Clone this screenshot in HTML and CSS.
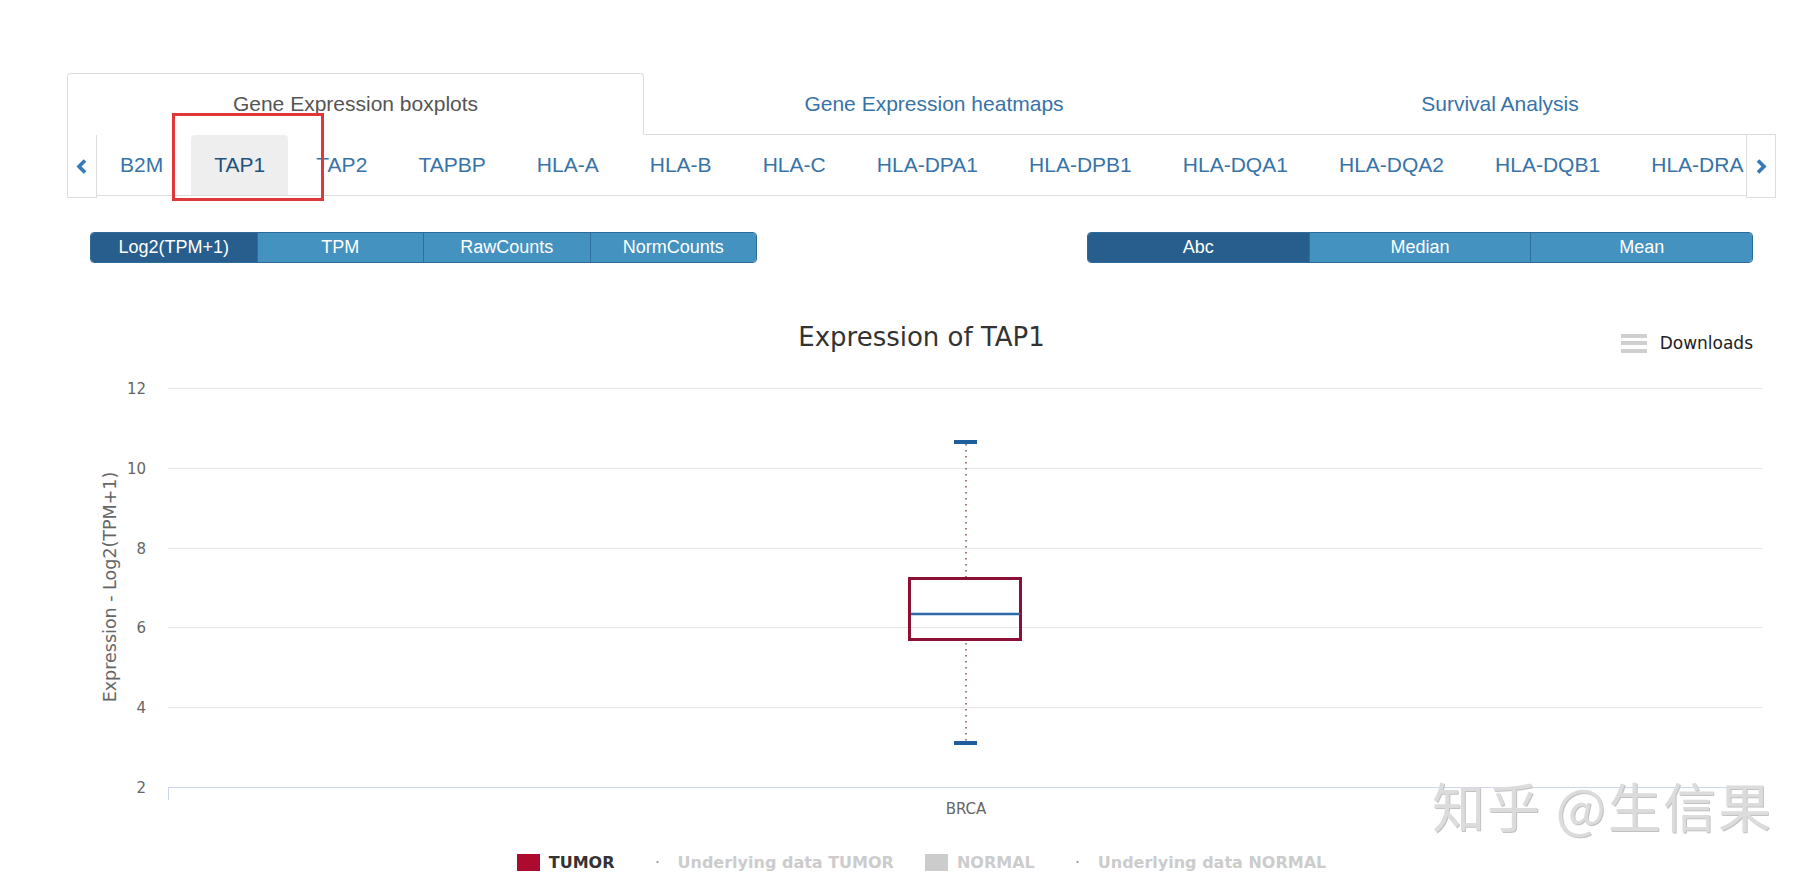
FILE: index.html
```html
<!DOCTYPE html>
<html>
<head>
<title>Gene Expression boxplots</title>
<link rel="stylesheet" href="styles.css">
</head>
<body>

<div class="page">
<!-- main tabs -->
<div class="main-tabs">
<div class="main-tab active">Gene Expression boxplots</div>
<div class="main-tab">Gene Expression heatmaps</div>
<div class="main-tab">Survival Analysis</div>
</div>

<!-- gene selector -->
<div class="gene-bar">
<div class="scroll-btn left">
<svg width="12" height="15" viewBox="0 0 12 15"><polyline points="9,1.5 3,7.5 9,13.5" fill="none" stroke="#337ab7" stroke-width="3.6"/></svg>
</div>
<div class="gene-list">
<span class="gene">B2M</span>
<span class="gene active">TAP1</span>
<span class="gene">TAP2</span>
<span class="gene">TAPBP</span>
<span class="gene">HLA-A</span>
<span class="gene">HLA-B</span>
<span class="gene">HLA-C</span>
<span class="gene">HLA-DPA1</span>
<span class="gene">HLA-DPB1</span>
<span class="gene">HLA-DQA1</span>
<span class="gene">HLA-DQA2</span>
<span class="gene">HLA-DQB1</span>
<span class="gene">HLA-DRA</span>
</div>
<div class="scroll-btn right">
<svg width="12" height="15" viewBox="0 0 12 15"><polyline points="3,1.5 9,7.5 3,13.5" fill="none" stroke="#337ab7" stroke-width="3.6"/></svg>
</div>
</div>

<div class="red-mark"></div>

<!-- unit / sort buttons -->
<div class="toolbar">
<div class="btn-group units">
<button class="btn active">Log2(TPM+1)</button>
<button class="btn">TPM</button>
<button class="btn">RawCounts</button>
<button class="btn">NormCounts</button>
</div>
<div class="btn-group sort">
<button class="btn active">Abc</button>
<button class="btn">Median</button>
<button class="btn">Mean</button>
</div>
</div>

<!-- chart -->
<div class="chart">
<div class="chart-title">Expression of TAP1</div>
<div class="export">
<span class="burger"><i></i><i></i><i></i></span>
<span>Downloads</span>
</div>

<svg class="plot" width="1709" height="470" viewBox="0 0 1709 470">
<g stroke="#e6e6e6" stroke-width="1">
<line x1="101" y1="36.5" x2="1695" y2="36.5"/>
<line x1="101" y1="116.5" x2="1695" y2="116.5"/>
<line x1="101" y1="196.5" x2="1695" y2="196.5"/>
<line x1="101" y1="275.5" x2="1695" y2="275.5"/>
<line x1="101" y1="355.5" x2="1695" y2="355.5"/>
</g>
<g stroke="#ccd6eb" stroke-width="1">
<line x1="101" y1="435.5" x2="1695" y2="435.5"/>
<line x1="101.5" y1="435" x2="101.5" y2="448"/>
</g>
<g class="y-labels" text-anchor="end">
<text x="79" y="41.5">12</text>
<text x="79" y="121.5">10</text>
<text x="79" y="201.5">8</text>
<text x="79" y="280.5">6</text>
<text x="79" y="360.5">4</text>
<text x="79" y="440.5">2</text>
</g>
<text class="y-title" transform="translate(43 235) rotate(-90)" text-anchor="middle">Expression - Log2(TPM+1)</text>
<text class="x-label" x="899" y="462" text-anchor="middle">BRCA</text>

<!-- box -->
<g stroke="#8a5e52" stroke-width="1.6" stroke-dasharray="1.6 4.4">
<line x1="899" y1="92" x2="899" y2="225"/>
<line x1="899" y1="291" x2="899" y2="389"/>
</g>
<g stroke="#1f5d9c" stroke-width="4">
<line x1="887" y1="90" x2="910" y2="90"/>
<line x1="887" y1="391" x2="910" y2="391"/>
</g>
<rect x="842.5" y="226.5" width="111" height="61" fill="none" stroke="#8c0f36" stroke-width="3"/>
<line x1="844" y1="262" x2="953" y2="262" stroke="#2e6aa6" stroke-width="2.4"/>
</svg>

<div class="legend">
<div class="legend-item"><span class="swatch tumor"></span><span class="label on">TUMOR</span></div>
<div class="legend-item"><span class="dot"></span><span class="label">Underlying data TUMOR</span></div>
<div class="legend-item"><span class="swatch normal"></span><span class="label">NORMAL</span></div>
<div class="legend-item"><span class="dot"></span><span class="label">Underlying data NORMAL</span></div>
</div>
</div>

<div class="watermark">知乎 @生信果</div>
</div>

</body>
</html>
```

FILE: styles.css
```css
* {
margin: 0;
padding: 0;
box-sizing: border-box;
}

body {
background: #fff;
font-family: 'Liberation Sans', Arial, sans-serif;
color: #333;
}

.page {
position: relative;
width: 1709px;
margin-left: 67px;
padding-top: 73px;
height: 882px;
}

/* main tabs */
.main-tabs {
display: grid;
grid-template-columns: 577px 580px 1fr;
height: 62px;
}

.main-tab {
display: flex;
align-items: center;
justify-content: center;
font-size: 21px;
color: #3873a8;
border-bottom: 1px solid #ddd;
}

.main-tab.active {
color: #555;
border: 1px solid #ddd;
border-bottom-color: transparent;
border-radius: 4px 4px 0 0;
}

/* gene selector */
.gene-bar {
display: flex;
align-items: flex-start;
}

.scroll-btn {
flex: none;
width: 30px;
height: 63px;
display: flex;
align-items: center;
justify-content: center;
border: 1px solid #ddd;
background: #fff;
}

.scroll-btn.left {
border-top: none;
}

.scroll-btn.right {
height: 64px;
margin-top: -1px;
}

.gene-list {
flex: 1;
display: flex;
gap: 5.1px;
height: 61px;
overflow: hidden;
border-bottom: 1px solid #ddd;
}

.gene {
flex: none;
padding: 0 23px;
line-height: 60px;
height: 60px;
font-size: 21px;
color: #3873a8;
white-space: nowrap;
border-radius: 4px 4px 0 0;
}

.gene:last-child {
padding-right: 0;
}

.gene.active {
background: #eee;
color: #23527c;
}

.red-mark {
position: absolute;
left: 105px;
top: 113px;
width: 152px;
height: 88px;
border: 3px solid #e0383a;
}

/* buttons */
.toolbar {
display: flex;
justify-content: space-between;
padding: 0 23px;
margin-top: 34px;
}

.btn-group {
display: flex;
height: 31px;
border-radius: 4px;
overflow: hidden;
border: 1px solid #2f6b98;
}

.btn-group.units {
width: 667px;
}

.btn-group.sort {
width: 666px;
}

.btn {
flex: 1;
border: none;
border-right: 1px solid #2f6f9e;
background: #4492bf;
color: #fff;
font-family: 'Liberation Sans', Arial, sans-serif;
font-size: 18px;
}

.btn:last-child {
border-right: none;
}

.btn.active {
background: #285e8e;
}

/* chart */
.chart {
position: relative;
margin-top: 17px;
padding-top: 42px;
font-family: 'DejaVu Sans', Verdana, sans-serif;
}

.chart-title {
text-align: center;
font-size: 26px;
line-height: 30px;
color: #333;
}

.export {
position: absolute;
top: 52px;
right: 23px;
display: flex;
align-items: center;
gap: 13px;
font-size: 17px;
line-height: 22px;
color: #222;
}

.burger {
display: flex;
flex-direction: column;
gap: 3.5px;
width: 26px;
}

.burger i {
display: block;
height: 4px;
background: #cfcfcf;
}

.plot {
display: block;
}

.y-labels text,
.x-label {
font-size: 15px;
fill: #666;
}

.y-title {
font-size: 17.5px;
fill: #666;
dominant-baseline: central;
}

.legend {
display: flex;
justify-content: center;
gap: 31px;
margin-top: 30px;
height: 20px;
}

.legend-item {
display: flex;
align-items: center;
gap: 9px;
}

.swatch {
width: 23px;
height: 17px;
}

.swatch.tumor {
background: #ad0a2f;
}

.swatch.normal {
background: #ccc;
}

.dot {
width: 23px;
height: 2px;
background: radial-gradient(circle, #999 1px, transparent 1.2px);
}

.label {
font-weight: bold;
font-size: 16px;
color: #ccc;
}

.label.on {
color: #333;
}

.watermark {
position: absolute;
left: 1365px;
top: 779px;
font-family: 'Noto Sans CJK SC', sans-serif;
font-size: 53px;
line-height: 1;
letter-spacing: 2px;
color: #dcdcdc;
text-shadow: 1px 1px 0 #c2c2c2;
white-space: nowrap;
}
```
